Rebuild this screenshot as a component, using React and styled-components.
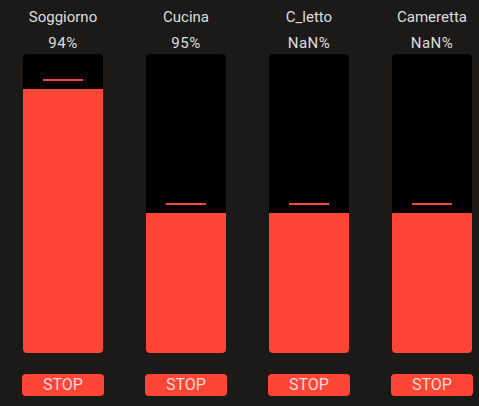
import React from "react";
import styled, { createGlobalStyle } from "styled-components";

const rooms = [
  { name: "Soggiorno", value: "94%", level: 264, mark: 272 },
  { name: "Cucina", value: "95%", level: 140, mark: 148 },
  { name: "C_letto", value: "NaN%", level: 140, mark: 148 },
  { name: "Cameretta", value: "NaN%", level: 140, mark: 148 },
];

const App = () => {
  return (
    <>
      <GlobalStyle />
      <Root>
        <Row>
          {rooms.map((room) => (
            <Column key={room.name}>
              <Label>{room.name}</Label>
              <Value>{room.value}</Value>
              <Bar>
                <Marker style={{ bottom: room.mark }} />
                <Fill style={{ height: room.level }} />
              </Bar>
              <StopButton>STOP</StopButton>
            </Column>
          ))}
        </Row>
      </Root>
    </>
  );
};

const GlobalStyle = createGlobalStyle`
  html, body {
    margin: 0;
    padding: 0;
    background-color: #1c1a19;
    overflow: hidden;
  }
  body {
    font-family: Roboto, "Liberation Sans", sans-serif;
  }
`;
const Root = styled.div`
  width: 479px;
  height: 406px;
  box-sizing: border-box;
  background-color: #1c1a19;
  padding: 7px 0 0 22px;
  overflow: hidden;
`;
const Row = styled.div`
  display: flex;
  gap: 41px;
`;
const Column = styled.div`
  width: 82px;
  flex-shrink: 0;
  display: flex;
  flex-direction: column;
  align-items: center;
`;
const Label = styled.div`
  font-size: 15px;
  line-height: 20px;
  color: #dedede;
  white-space: nowrap;
`;
const Value = styled.div`
  font-size: 15px;
  line-height: 20px;
  margin-top: 6px;
  color: #dedede;
  letter-spacing: 0.5px;
  white-space: nowrap;
`;
const Bar = styled.div`
  position: relative;
  margin-top: 1px;
  width: 80px;
  height: 299px;
  background-color: #000;
  border-radius: 4px;
  overflow: hidden;
  display: flex;
  flex-direction: column;
  justify-content: flex-end;
`;
const Fill = styled.div`
  width: 100%;
  background-color: #ff4535;
`;
const Marker = styled.div`
  position: absolute;
  left: 20px;
  width: 40px;
  height: 2px;
  background-color: #ff4535;
`;
const StopButton = styled.button`
  margin-top: 21px;
  width: 82px;
  height: 22px;
  padding: 0;
  border: none;
  border-radius: 4px;
  background-color: #ff4535;
  color: #f4dcd8;
  font-family: Roboto, "Liberation Sans", sans-serif;
  font-size: 16px;
  line-height: 22px;
`;

export default App;
